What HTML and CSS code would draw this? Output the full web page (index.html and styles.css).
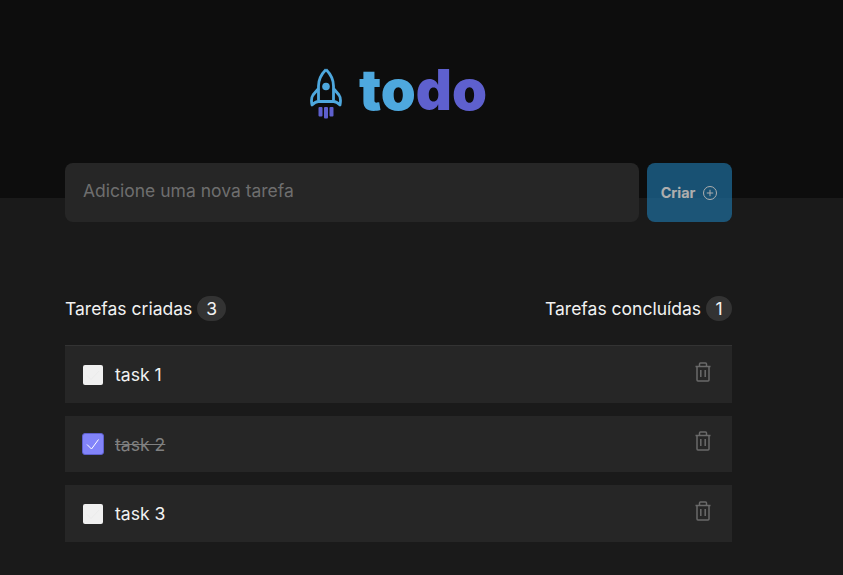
FILE: index.html
```html
<!DOCTYPE html>
<html lang="en">
<head>
  <meta charset="UTF-8" />
  <meta name="viewport" content="width=device-width, initial-scale=1.0"/>
  <title>todo</title>
  <link rel="stylesheet" href="styles.css">
</head>
<body>
  <div class="app">
    <header class="header">
      <div class="logo">
        <svg class="logo-icon" width="32" height="51" viewBox="0 0 32 51" fill="none">
          <path d="M16 1.500C11.500 6 8.500 11.500 8.500 18V32.500M16 1.500C20.500 6 23.500 11.500 23.500 18V32.500" stroke="#4ea8de" stroke-width="2.800" stroke-linejoin="round"/>
          <path d="M8.500 20.500L3 27C1.500 29 1.200 33 2 37C4 35 6 33.500 8.500 33.500H23.500C26 33.500 28 35 30 37C30.800 33 30.500 29 29 27L23.500 20.500" stroke="#4ea8de" stroke-width="2.800" stroke-linejoin="round"/>
          <circle cx="16" cy="18.500" r="3.800" fill="#4ea8de"/>
          <rect x="8.500" y="39" width="4" height="9.500" rx="1" fill="#5e60ce"/>
          <rect x="14" y="39" width="4" height="11.500" rx="1" fill="#5e60ce"/>
          <rect x="19.500" y="39" width="4" height="9.500" rx="1" fill="#5e60ce"/>
        </svg>
        <h1 class="logo-text"><span class="logo-to">to</span><span class="logo-do">do</span></h1>
      </div>
    </header>

    <main class="content">
      <form class="new-task">
        <input class="new-task-input" type="text" placeholder="Adicione uma nova tarefa" />
        <button class="new-task-button" type="button">
          Criar
          <svg width="16" height="16" viewBox="0 0 16 16" fill="none" stroke="currentColor" stroke-width="1">
            <circle cx="8" cy="8" r="6.500"/>
            <path d="M8 4.800V11.200M4.800 8H11.200"/>
          </svg>
        </button>
      </form>

      <div class="summary">
        <div class="summary-item">Tarefas criadas <span class="count">3</span></div>
        <div class="summary-item">Tarefas concluídas <span class="count">1</span></div>
      </div>

      <ul class="tasks">
        <li class="task">
          <span class="check">
            <svg width="20" height="20" viewBox="0 0 20 20" fill="none" stroke="#ebebeb" stroke-width="1">
              <path d="M4 10.500L8 14.500L16 6"/>
            </svg>
          </span>
          <span class="task-name">task 1</span>
          <svg class="trash" width="16" height="20" viewBox="0 0 16 20" fill="none" stroke="currentColor" stroke-width="1.500">
            <path d="M0.500 4.500H15.500M4.500 4.500V2C4.500 1.400 4.900 1 5.500 1H10.500C11.100 1 11.500 1.400 11.500 2V4.500M2 4.500V18C2 18.600 2.400 19 3 19H13C13.600 19 14 18.600 14 18V4.500M5.800 8V15M10.200 8V15"/>
          </svg>
        </li>
        <li class="task done">
          <span class="check">
            <svg width="20" height="20" viewBox="0 0 20 20" fill="none" stroke="#fff" stroke-width="1">
              <path d="M4 10.500L8.500 15L15.500 5.500"/>
            </svg>
          </span>
          <span class="task-name">task 2</span>
          <svg class="trash" width="16" height="20" viewBox="0 0 16 20" fill="none" stroke="currentColor" stroke-width="1.500">
            <path d="M0.500 4.500H15.500M4.500 4.500V2C4.500 1.400 4.900 1 5.500 1H10.500C11.100 1 11.500 1.400 11.500 2V4.500M2 4.500V18C2 18.600 2.400 19 3 19H13C13.600 19 14 18.600 14 18V4.500M5.800 8V15M10.200 8V15"/>
          </svg>
        </li>
        <li class="task">
          <span class="check">
            <svg width="20" height="20" viewBox="0 0 20 20" fill="none" stroke="#ebebeb" stroke-width="1">
              <path d="M4 10.500L8 14.500L16 6"/>
            </svg>
          </span>
          <span class="task-name">task 3</span>
          <svg class="trash" width="16" height="20" viewBox="0 0 16 20" fill="none" stroke="currentColor" stroke-width="1.500">
            <path d="M0.500 4.500H15.500M4.500 4.500V2C4.500 1.400 4.900 1 5.500 1H10.500C11.100 1 11.500 1.400 11.500 2V4.500M2 4.500V18C2 18.600 2.400 19 3 19H13C13.600 19 14 18.600 14 18V4.500M5.800 8V15M10.200 8V15"/>
          </svg>
        </li>
      </ul>
    </main>
  </div>
</body>
</html>
```

FILE: styles.css
```css
* {
  box-sizing: border-box;
}

body {
  margin: 0;
  height: 575px;
  overflow: hidden;
  font-family: 'Inter', sans-serif;
  background-color: #1a1a1a;
  color: #f2f2f2;
}

.header {
  height: 198px;
  background-color: #0d0d0d;
  padding-top: 68px;
}

.logo {
  width: 667px;
  margin-left: 65px;
  display: flex;
  align-items: flex-start;
  justify-content: center;
  gap: 17px;
  height: 52px;
}

.logo-text {
  margin: 0;
  font-size: 56px;
  line-height: 44px;
  font-weight: 900;
}

.logo-to {
  color: #4ea8de;
}

.logo-do {
  color: #5e60ce;
}

.content {
  width: 667px;
  margin-left: 65px;
}

.new-task {
  display: flex;
  gap: 8px;
  height: 59px;
  margin-top: -35px;
}

.new-task-input {
  flex: 1;
  border: none;
  border-radius: 8px;
  padding: 0 18px 5px;
  background-color: #262626;
  font-family: inherit;
  font-size: 17.5px;
  color: #f2f2f2;
}

.new-task-input::placeholder {
  color: #6e6e6e;
}

.new-task-button {
  width: 85px;
  border: none;
  border-radius: 8px;
  background-color: #1e6f9f;
  opacity: 0.7;
  color: #f2f2f2;
  font-family: inherit;
  font-size: 14.4px;
  font-weight: 700;
  display: flex;
  align-items: center;
  justify-content: center;
  gap: 7px;
}

.summary {
  display: flex;
  justify-content: space-between;
  align-items: center;
  margin-top: 74px;
  height: 25px;
  font-size: 17.5px;
}

.summary-item {
  display: flex;
  align-items: center;
  gap: 5px;
}

.count {
  padding: 0 9px;
  min-width: 26px;
  height: 25px;
  border-radius: 999px;
  background-color: #333333;
  display: flex;
  align-items: center;
  justify-content: center;
}

.tasks {
  list-style: none;
  margin: 24px 0 0;
  padding: 0;
  border-top: 1px solid #333333;
  display: flex;
  flex-direction: column;
  gap: 13px;
}

.task {
  height: 56.5px;
  background-color: #262626;
  display: flex;
  align-items: center;
  padding: 0 21px 0 18px;
  gap: 12px;
}

.check {
  width: 20px;
  height: 20px;
  margin-top: 1px;
  border-radius: 2px;
  background-color: #f0f0f0;
  flex-shrink: 0;
}

.check svg {
  display: block;
}

.task-name {
  flex: 1;
  font-size: 17.6px;
}

.trash {
  color: #6a6a6a;
  margin-top: -5px;
}

.done .check {
  width: 22px;
  height: 22px;
  margin-top: 0;
  margin-left: -1px;
  margin-right: -1px;
  border: 1px solid #5e60ce;
  border-radius: 3px;
  background-color: #8284fa;
}

.done .task-name {
  padding-top: 2px;
  color: #808080;
  text-decoration: line-through;
}
```
